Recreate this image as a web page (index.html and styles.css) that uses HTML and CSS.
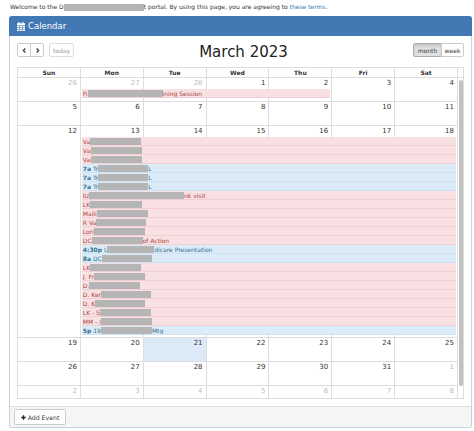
FILE: index.html
```html
<!DOCTYPE html>
<html>
<head>
<meta charset="utf-8">
<title>Calendar</title>
<link rel="stylesheet" href="styles.css">
</head>
<body>
<p class="welcome">Welcome to the D<span class="redact top-redact"></span>t portal. By using this page, you are agreeing to <a href="#">these terms</a>.</p>
<div class="panel">
  <div class="panel-head">
    <svg class="cal-icon" viewBox="0 0 8 9" width="8" height="9">
      <rect x="1.4" y="0" width="1.2" height="2" fill="#fff"/>
      <rect x="5.4" y="0" width="1.2" height="2" fill="#fff"/>
      <rect x="0" y="1.2" width="8" height="2.2" fill="#fff"/>
      <rect x="0" y="4" width="2.3" height="1.3" fill="#fff"/>
      <rect x="2.85" y="4" width="2.3" height="1.3" fill="#fff"/>
      <rect x="5.7" y="4" width="2.3" height="1.3" fill="#fff"/>
      <rect x="0" y="5.8" width="2.3" height="1.3" fill="#fff"/>
      <rect x="2.85" y="5.8" width="2.3" height="1.3" fill="#fff"/>
      <rect x="5.7" y="5.8" width="2.3" height="1.3" fill="#fff"/>
      <rect x="0" y="7.6" width="2.3" height="1.4" fill="#fff"/>
      <rect x="2.85" y="7.6" width="2.3" height="1.4" fill="#fff"/>
      <rect x="5.7" y="7.6" width="2.3" height="1.4" fill="#fff"/>
    </svg>
    <span>Calendar</span>
  </div>
  <div class="panel-body">
    <div class="toolbar">
      <div class="tb-left">
        <div class="btn-group">
          <button class="btn nav-btn"><svg viewBox="0 0 6 6" width="5" height="5"><polyline points="4,0.6 1.6,3 4,5.4" fill="none" stroke="#333" stroke-width="1.4"/></svg></button>
          <button class="btn nav-btn"><svg viewBox="0 0 6 6" width="5" height="5"><polyline points="2,0.6 4.4,3 2,5.4" fill="none" stroke="#333" stroke-width="1.4"/></svg></button>
        </div>
        <button class="btn today-btn">today</button>
      </div>
      <h2 class="title">March 2023</h2>
      <div class="btn-group">
        <button class="btn month-btn active">month</button>
        <button class="btn week-btn">week</button>
      </div>
    </div>

    <div class="cal">
      <div class="cal-head">
        <div class="dow-row">
          <div class="dow">Sun</div><div class="dow">Mon</div><div class="dow">Tue</div><div class="dow">Wed</div><div class="dow">Thu</div><div class="dow">Fri</div><div class="dow">Sat</div>
        </div>
        <div class="gutter"></div>
      </div>
      <div class="cal-body">
        <div class="weeks">
          <div class="week">
            <div class="day other">26</div><div class="day other">27</div><div class="day other">28</div><div class="day">1</div><div class="day">2</div><div class="day">3</div><div class="day">4</div>
            <div class="events mon-thu">
              <div class="ev red">Fi<span class="redact" style="width:75px"></span>ining Session</div>
            </div>
          </div>
          <div class="week">
            <div class="day">5</div><div class="day">6</div><div class="day">7</div><div class="day">8</div><div class="day">9</div><div class="day">10</div><div class="day">11</div>
          </div>
          <div class="week">
            <div class="day">12</div><div class="day">13</div><div class="day">14</div><div class="day">15</div><div class="day">16</div><div class="day">17</div><div class="day">18</div>
            <div class="events mon-sat">
              <div class="ev red">Va<span class="redact" style="width:51px"></span></div>
              <div class="ev red">Var<span class="redact pull" style="width:51px"></span></div>
              <div class="ev red">Var<span class="redact pull" style="width:51px"></span></div>
              <div class="ev blue"><b>7a</b>&nbsp;Tr<span class="redact" style="width:50px"></span>L</div>
              <div class="ev blue"><b>7a</b>&nbsp;Tr<span class="redact" style="width:50px"></span>L</div>
              <div class="ev blue"><b>7a</b>&nbsp;Tr<span class="redact" style="width:50px"></span>L</div>
              <div class="ev red">IU<span class="redact" style="width:95px"></span>nk visit</div>
              <div class="ev red">LK<span class="redact" style="width:52px"></span></div>
              <div class="ev red">Maili<span class="redact" style="width:51px"></span></div>
              <div class="ev red">R Va<span class="redact" style="width:50px"></span></div>
              <div class="ev red">Lori<span class="redact" style="width:51px"></span></div>
              <div class="ev red">DC<span class="redact" style="width:51px"></span>of Action</div>
              <div class="ev blue"><b>4:30p</b>&nbsp;L<span class="redact" style="width:47px"></span>dicare Presentation</div>
              <div class="ev blue"><b>8a</b>&nbsp;DC<span class="redact" style="width:50px"></span></div>
              <div class="ev red">LK<span class="redact" style="width:51px"></span></div>
              <div class="ev red">J. Fr<span class="redact" style="width:51px"></span></div>
              <div class="ev red">D.<span class="redact" style="width:51px"></span></div>
              <div class="ev red">D. Ker<span class="redact" style="width:50px"></span></div>
              <div class="ev red">D. K<span class="redact" style="width:50px"></span></div>
              <div class="ev red">LK - S<span class="redact" style="width:51px"></span></div>
              <div class="ev red">MM - /<span class="redact" style="width:51px"></span></div>
              <div class="ev blue"><b>5p</b>&nbsp;19<span class="redact" style="width:51px"></span>Mtg</div>
            </div>
          </div>
          <div class="week">
            <div class="day">19</div><div class="day">20</div><div class="day today">21</div><div class="day">22</div><div class="day">23</div><div class="day">24</div><div class="day">25</div>
          </div>
          <div class="week">
            <div class="day">26</div><div class="day">27</div><div class="day">28</div><div class="day">29</div><div class="day">30</div><div class="day">31</div><div class="day other">1</div>
          </div>
          <div class="week partial">
            <div class="day other">2</div><div class="day other">3</div><div class="day other">4</div><div class="day other">5</div><div class="day other">6</div><div class="day other">7</div><div class="day other">8</div>
          </div>
        </div>
        <div class="track"><div class="thumb"></div></div>
      </div>
    </div>
  </div>
  <div class="panel-foot">
    <button class="btn add-btn"><svg viewBox="0 0 6 6" width="5" height="5"><path d="M3 0.3V5.7M0.3 3H5.7" stroke="#222" stroke-width="1.6" fill="none"/></svg><span>Add Event</span></button>
  </div>
</div>
</body>
</html>
```

FILE: styles.css
```css
* { box-sizing: border-box; }

body {
  margin: 0;
  font-family: "DejaVu Sans", Verdana, sans-serif;
  color: #333;
  background: #fff;
}

.welcome {
  margin: 0;
  height: 16px;
  padding: 3px 0 0 10px;
  font-size: 6px;
  line-height: 8px;
  white-space: nowrap;
}

.welcome a {
  color: #337ab7;
  text-decoration: none;
}

.redact {
  display: inline-block;
  background: #b5b5b5;
  height: 7px;
  vertical-align: top;
  flex-shrink: 0;
}

.top-redact {
  width: 80px;
  margin-top: 0.5px;
}

.panel {
  margin-left: 9px;
  width: 463px;
  border: 1px solid #c3d3e6;
  border-top: none;
  border-radius: 3px;
  background: #fff;
}

.panel-head {
  margin: 0 -1px;
  height: 20px;
  background: #4278b4;
  border-radius: 3px 3px 0 0;
  color: #fff;
  display: flex;
  align-items: center;
  gap: 3px;
  padding-left: 8px;
  font-size: 8.5px;
}

.cal-icon { display: block; }

.panel-body {
  padding: 7px;
}

.toolbar {
  height: 14px;
  display: flex;
  align-items: flex-start;
  margin-bottom: 10px;
}

.tb-left {
  display: flex;
  gap: 5px;
}

.btn-group { display: flex; }

.btn {
  height: 14px;
  border: 1px solid #ccc;
  background: #fff;
  border-radius: 2px;
  font-family: inherit;
  font-size: 6px;
  color: #333;
  padding: 0;
  display: flex;
  align-items: center;
  justify-content: center;
}

.btn-group .btn:first-child { border-radius: 2px 0 0 2px; }
.btn-group .btn:last-child { border-radius: 0 2px 2px 0; margin-left: -1px; }

.nav-btn { width: 14px; }
.today-btn { width: 25px; color: #999; border-color: #ddd; }
.month-btn { width: 29px; }
.week-btn { width: 23px; }

.btn.active {
  background: #e2e2e2;
  border-color: #adadad;
  box-shadow: inset 0 2px 3px rgba(0, 0, 0, 0.14);
}

.title {
  flex: 1;
  margin: 2px 0 0;
  text-align: center;
  font-size: 15px;
  font-weight: normal;
  line-height: 14px;
  color: #222;
}

.cal {
  border: 1px solid #ddd;
}

.cal-head {
  display: flex;
  height: 10px;
  border-bottom: 1px solid #ddd;
}

.dow-row {
  flex: 1;
  display: grid;
  grid-template-columns: repeat(7, minmax(0, 1fr));
}

.dow {
  border-right: 1px solid #ddd;
  text-align: center;
  font-size: 6px;
  font-weight: bold;
  line-height: 9px;
}

.gutter { width: 5px; }

.cal-body { display: flex; }

.weeks { flex: 1; min-width: 0; }

.week {
  display: grid;
  grid-template-columns: repeat(7, minmax(0, 1fr));
  grid-template-rows: 11px 1fr;
  min-height: 24px;
  border-bottom: 1px solid #ddd;
}

.week.partial {
  min-height: 12px;
  height: 12px;
  border-bottom: none;
}

.day {
  grid-row: 1 / 3;
  border-right: 1px solid #ddd;
  text-align: right;
  padding: 1px 3px 0 0;
  font-size: 7px;
  line-height: 9px;
  color: #333;
}

.day:nth-child(1) { grid-column: 1; }
.day:nth-child(2) { grid-column: 2; }
.day:nth-child(3) { grid-column: 3; }
.day:nth-child(4) { grid-column: 4; }
.day:nth-child(5) { grid-column: 5; }
.day:nth-child(6) { grid-column: 6; }
.day:nth-child(7) { grid-column: 7; }

.day.other { color: #bbb; }
.day.today { background: #dce9f7; }

.events {
  grid-row: 2;
  padding: 0 2px 2px 1px;
  min-width: 0;
  overflow: hidden;
}

.mon-thu { grid-column: 2 / 6; }
.mon-sat { grid-column: 2 / 8; }

.ev {
  height: 9px;
  display: flex;
  align-items: center;
  white-space: nowrap;
  overflow: hidden;
  padding-left: 1px;
  font-size: 6px;
  line-height: 7px;
  border-top: 1px solid transparent;
  border-bottom: 1px solid #f2cfd3;
}

.ev .redact { height: 7px; align-self: center; }
.ev .pull { margin-left: -2px; }

.ev.red {
  background: #f9e1e3;
  color: #a94442;
}

.ev.blue {
  background: #dcebf8;
  color: #31708f;
  border-bottom-color: #cfe2f3;
}

.ev b { font-weight: bold; }

.track {
  width: 5px;
  padding: 2px 0.5px 0;
}

.thumb {
  width: 4px;
  height: 306px;
  background: #c1c1c1;
  border-radius: 2px;
}

.panel-foot {
  background: #f5f5f5;
  border-top: 1px solid #ddd;
  padding: 2px 4px;
  border-radius: 0 0 3px 3px;
}

.add-btn {
  height: 16px;
  width: 52px;
  gap: 2px;
  font-size: 6.2px;
  border-radius: 2px;
}
```
